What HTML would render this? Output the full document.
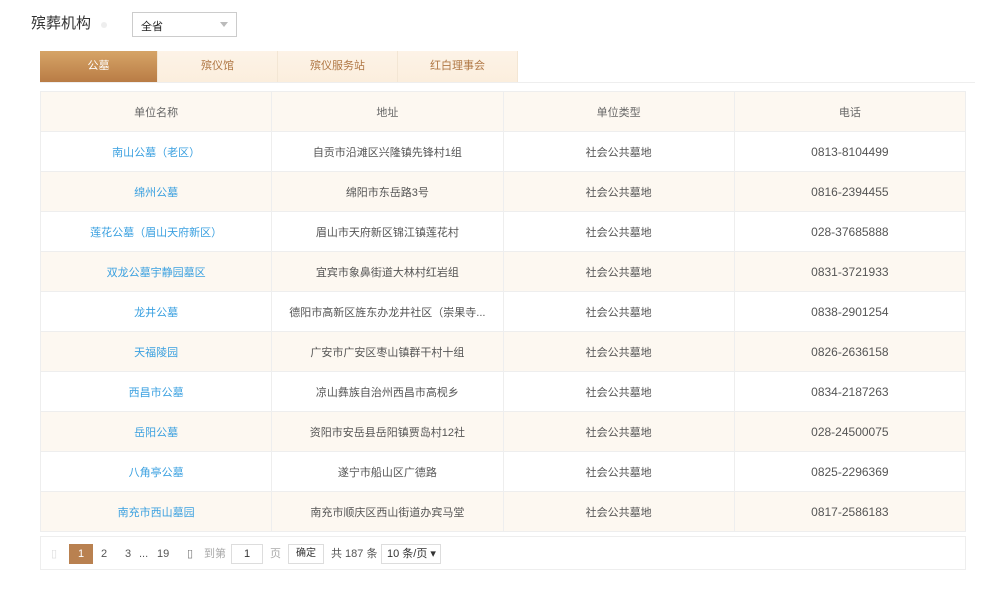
<!DOCTYPE html>
<html><head><meta charset="utf-8"><style>
*{margin:0;padding:0;box-sizing:border-box}
body{width:1000px;height:589px;background:#fff;font-family:"Liberation Sans","Noto Sans CJK SC",sans-serif;position:relative;overflow:hidden;color:#555}
.title{position:absolute;left:31px;top:12px;font-size:15px;color:#333}
.dot{position:absolute;left:101px;top:22px;width:6px;height:6px;border-radius:50%;background:#eee}
.sel{position:absolute;left:132px;top:12px;width:105px;height:25px;border:1px solid #ccc;font-size:11px;color:#222;padding:5px 0 0 8px}
.sel:after{content:"";position:absolute;right:8px;top:9px;border:4px solid transparent;border-top:5px solid #bbb}
.tabs{position:absolute;left:40px;top:51px;height:32px;width:935px;border-bottom:1px solid #eee}
.tab{position:absolute;top:0;height:31px;width:120px;background:linear-gradient(#fdf3e7,#fbeedd);font-size:11px;color:#b07845;text-align:center;line-height:31px;border-right:1px solid #f3e6d4}
.tab.a{background:linear-gradient(#d6a467,#b97c45);color:#fff;width:118px}
table{position:absolute;left:40px;top:91px;width:926px;border-collapse:collapse;font-size:11px;table-layout:fixed}
td,th{height:40px;border:1px solid #eee;text-align:center;font-weight:normal;color:#555;white-space:nowrap;overflow:hidden}
th{background:#fdf8f1;color:#666}
tr:nth-child(odd) td{background:#fdf8f1}
td:first-child{color:#3aa0e0}
td:last-child{font-size:12px}
.pg{position:absolute;left:40px;top:536px;width:926px;height:34px;border:1px solid #eee;font-size:11px;color:#555}
.pg span{position:absolute;top:10px;line-height:14px}
.cur{position:absolute;left:28px;top:7px;width:24px;height:20px;background:#b98150;color:#fff;text-align:center;line-height:20px}
.box{position:absolute;top:7px;height:20px;border:1px solid #ddd;text-align:center;line-height:18px;color:#333}
</style></head><body>
<div class="title">殡葬机构</div><div class="dot"></div>
<div class="sel">全省</div>
<div class="tabs">
<div class="tab a" style="left:0">公墓</div>
<div class="tab" style="left:118px">殡仪馆</div>
<div class="tab" style="left:238px">殡仪服务站</div>
<div class="tab" style="left:358px">红白理事会</div>
</div>
<table>
<tr><th>单位名称</th><th>地址</th><th>单位类型</th><th>电话</th></tr>
<tr><td>南山公墓（老区）</td><td>自贡市沿滩区兴隆镇先锋村1组</td><td>社会公共墓地</td><td>0813-8104499</td></tr>
<tr><td>绵州公墓</td><td>绵阳市东岳路3号</td><td>社会公共墓地</td><td>0816-2394455</td></tr>
<tr><td>莲花公墓（眉山天府新区）</td><td>眉山市天府新区锦江镇莲花村</td><td>社会公共墓地</td><td>028-37685888</td></tr>
<tr><td>双龙公墓宇静园墓区</td><td>宜宾市象鼻街道大林村红岩组</td><td>社会公共墓地</td><td>0831-3721933</td></tr>
<tr><td>龙井公墓</td><td>德阳市高新区旌东办龙井社区（崇果寺...</td><td>社会公共墓地</td><td>0838-2901254</td></tr>
<tr><td>天福陵园</td><td>广安市广安区枣山镇群干村十组</td><td>社会公共墓地</td><td>0826-2636158</td></tr>
<tr><td>西昌市公墓</td><td>凉山彝族自治州西昌市高枧乡</td><td>社会公共墓地</td><td>0834-2187263</td></tr>
<tr><td>岳阳公墓</td><td>资阳市安岳县岳阳镇贾岛村12社</td><td>社会公共墓地</td><td>028-24500075</td></tr>
<tr><td>八角亭公墓</td><td>遂宁市船山区广德路</td><td>社会公共墓地</td><td>0825-2296369</td></tr>
<tr><td>南充市西山墓园</td><td>南充市顺庆区西山街道办宾马堂</td><td>社会公共墓地</td><td>0817-2586183</td></tr>
</table>
<div class="pg">
<span style="left:10px;color:#ddd">▯</span>
<div class="cur">1</div>
<span style="left:60px">2</span>
<span style="left:84px">3</span>
<span style="left:98px">...</span>
<span style="left:116px">19</span>
<span style="left:146px;color:#777">▯</span>
<span style="left:163px;color:#aaa">到第</span>
<div class="box" style="left:190px;width:32px">1</div>
<span style="left:229px;color:#aaa">页</span>
<div class="box" style="left:247px;width:36px;font-size:10px">确定</div>
<span style="left:290px">共 187 条</span>
<div class="box" style="left:340px;width:60px;text-align:left;padding-left:5px">10 条/页 ▾</div>
</div>
</body></html>
